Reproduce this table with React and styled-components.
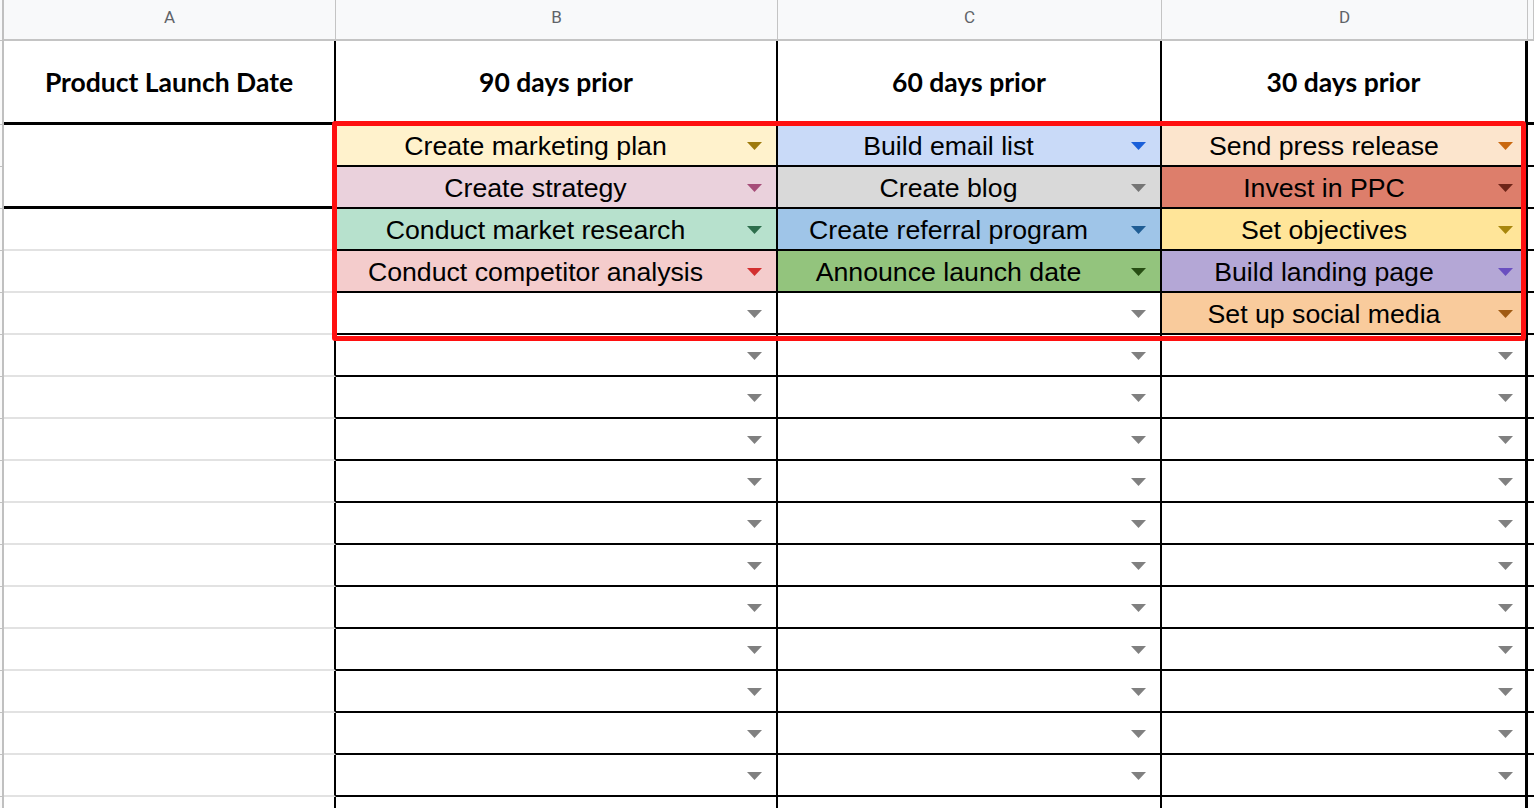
import React from 'react';
import styled, { createGlobalStyle } from 'styled-components';

const GlobalStyle = createGlobalStyle`
  html, body { margin: 0; padding: 0; background: #fff; overflow: hidden; }
  body { font-family: "Liberation Sans", Arial, sans-serif; }
`;

const Sheet = styled.div`
  position: relative;
  display: grid;
  grid-template-columns: 4px 332px 442px 384px 366px 1fr;
  grid-template-rows: 41px 84px repeat(17, 42px);
  width: 1534px;
  height: 808px;
  overflow: hidden;
`;

const Strip = styled.div`
  box-sizing: border-box;
  background: ${p => (p.$head ? '#f8f9fa' : '#fafafa')};
  border-right: 2px solid #c0c0c0;
  border-bottom: 1px solid #c0c0c0;
`;

const ColHead = styled.div`
  box-sizing: border-box;
  background: #f8f9fa;
  border-right: 1px solid #c4c4c4;
  border-bottom: 2px solid #c4c4c4;
  display: flex;
  align-items: center;
  justify-content: center;
  padding-bottom: 6px;
  font-family: Roboto, "Liberation Sans", Arial, sans-serif;
  font-size: 17px;
  color: #5f6368;
`;

const TitleCell = styled.div`
  box-sizing: border-box;
  background: #fff;
  border-bottom: 3px solid #000;
  border-right: ${p => p.$right || '2px'} solid #000;
  display: flex;
  align-items: center;
  justify-content: center;
  padding-top: 1px;
  font-family: Lato, "Open Sans", sans-serif;
  font-weight: 700;
  font-size: 26.5px;
  color: #000;
`;

const LeftCell = styled.div`
  box-sizing: border-box;
  background: #fff;
  border-right: 2px solid #000;
  border-bottom: ${p => (p.$thick ? '3px solid #000' : '2px solid #e2e2e2')};
  grid-row: ${p => (p.$span ? `span ${p.$span}` : 'auto')};
`;

const ChipCell = styled.div`
  box-sizing: border-box;
  background: ${p => p.$bg || '#fff'};
  border-right: ${p => (p.$last ? '3px' : '2px')} solid #000;
  border-bottom: 2px solid #000;
  display: flex;
  align-items: center;
  padding-right: ${p => (p.$last ? '12px' : '14px')};
  padding-top: 2px;
  gap: 12px;
`;

const ChipText = styled.span`
  flex: 1;
  text-align: center;
  font-size: 26.7px;
  color: #000;
  white-space: nowrap;
`;

const Edge = styled.div`
  box-sizing: border-box;
  background: #fff;
  border-bottom: ${p => (p.$thick ? '3px' : '2px')} solid #000;
`;

const Highlight = styled.div`
  position: absolute;
  left: 332px;
  top: 121px;
  width: 1194px;
  height: 220px;
  box-sizing: border-box;
  border: 5px solid #ff1010;
  border-radius: 3px;
  pointer-events: none;
`;

const Arrow = ({ color }) => (
  <svg width="15" height="8" viewBox="0 0 15 8" style={{ flex: 'none' }}>
    <path d="M0 0 H15 L7.5 8 Z" fill={color} />
  </svg>
);

const GRAY = '#808080';

const colB = [
  { t: 'Create marketing plan', bg: '#fff2cc', a: '#9e7a0c' },
  { t: 'Create strategy', bg: '#ead1dc', a: '#a64d79' },
  { t: 'Conduct market research', bg: '#b7e1cd', a: '#2d6e4c' },
  { t: 'Conduct competitor analysis', bg: '#f4cccc', a: '#d32f2f' },
];
const colC = [
  { t: 'Build email list', bg: '#c9daf8', a: '#1a5fd9' },
  { t: 'Create blog', bg: '#d9d9d9', a: '#757575' },
  { t: 'Create referral program', bg: '#9fc5e8', a: '#1f5d94' },
  { t: 'Announce launch date', bg: '#93c47d', a: '#274e13' },
];
const colD = [
  { t: 'Send press release', bg: '#fce5cd', a: '#c9680f' },
  { t: 'Invest in PPC', bg: '#dd7e6b', a: '#6e2518' },
  { t: 'Set objectives', bg: '#ffe599', a: '#a8860c' },
  { t: 'Build landing page', bg: '#b4a7d6', a: '#6a4fc0' },
  { t: 'Set up social media', bg: '#f9cb9c', a: '#a05a12' },
];

const Chip = ({ item, last, arrow = true }) => (
  <ChipCell $bg={item ? item.bg : '#fff'} $last={last}>
    <ChipText>{item ? item.t : ''}</ChipText>
    {arrow ? <Arrow color={item ? item.a : GRAY} /> : <span style={{ width: 15 }} />}
  </ChipCell>
);

export default function App() {
  const rows = [];
  for (let i = 0; i < 17; i++) {
    const arrow = i < 16;
    rows.push(
      <React.Fragment key={i}>
        <Strip />
        {i === 0 && <LeftCell $thick $span={2} />}
        {i >= 2 && <LeftCell />}
        <Chip item={colB[i]} arrow={arrow} />
        <Chip item={colC[i]} arrow={arrow} />
        <Chip item={colD[i]} arrow={arrow} last />
        <Edge />
      </React.Fragment>
    );
  }
  return (
    <>
      <GlobalStyle />
      <Sheet>
        <Strip $head />
        <ColHead>A</ColHead>
        <ColHead>B</ColHead>
        <ColHead>C</ColHead>
        <ColHead>D</ColHead>
        <ColHead />

        <Strip />
        <TitleCell>Product Launch Date</TitleCell>
        <TitleCell>90 days prior</TitleCell>
        <TitleCell>60 days prior</TitleCell>
        <TitleCell $right="3px">30 days prior</TitleCell>
        <Edge $thick />

        {rows}
        <Highlight />
      </Sheet>
    </>
  );
}
